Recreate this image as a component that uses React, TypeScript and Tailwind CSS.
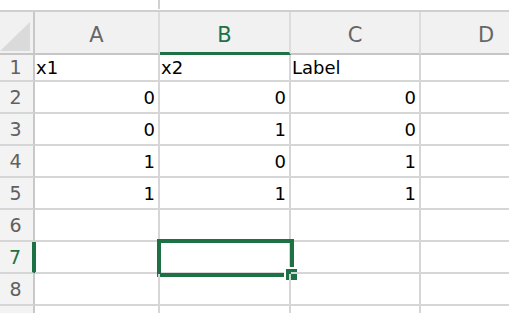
import React from 'react';

const COLS = [
    { key: 'A', w: 'w-[125px]' },
    { key: 'B', w: 'w-[131px]' },
    { key: 'C', w: 'w-[130px]' },
    { key: 'D', w: 'w-[132px]' },
];

const ROWS: (string | number)[][] = [
    ['x1', 'x2', 'Label'],
    [0, 0, 0],
    [0, 1, 0],
    [1, 0, 1],
    [1, 1, 1],
    [],
    [],
    [],
    [],
];

const App: React.FC = () => {
    return (
        <div className="w-[509px] h-[313px] overflow-hidden bg-white font-['DejaVu_Sans',sans-serif]">
            {/* toolbar leftovers */}
            <div className="h-[10px] flex">
                <div className="w-[158px]" />
                <div className="w-[2px] h-[9px] bg-[#d0d0d0]" />
            </div>
            <div className="h-[2px] bg-[#cfcfcf]" />

            {/* column headers */}
            <div className="flex h-[43px] bg-[#f1f1f1] w-[560px]">
                <div className="w-[35px] shrink-0 border-r-2 border-b-2 border-r-[#c8c8c8] border-b-[#c6c6c6] flex items-end">
                    <svg width="31" height="29" viewBox="0 0 31 29" className="mb-[2px]">
                        <polygon points="30,0 30,29 0,29" fill="#dadada" />
                    </svg>
                </div>
                {COLS.map((c) => (
                    <div
                        key={c.key}
                        className={`${c.w} shrink-0 border-r-2 border-r-[#dcdcdc] flex items-center justify-center pt-[7px] text-[21px] ${
                            c.key === 'B'
                                ? 'border-b-[3px] border-b-[#1e7145] text-[#1e7145]'
                                : 'border-b-2 border-b-[#c6c6c6] text-[#666666]'
                        }`}
                    >
                        {c.key}
                    </div>
                ))}
            </div>

            {/* rows */}
            {ROWS.map((row, i) => {
                const n = i + 1;
                const active = n === 7;
                return (
                    <div key={n} className={`flex w-[560px] ${n === 1 ? 'h-[27px]' : 'h-[32px]'}`}>
                        <div
                            className={`w-[35px] shrink-0 bg-[#f3f3f3] border-b-2 border-b-[#d6d6d6] flex items-center justify-center pr-[2px] text-[19px] ${
                                active
                                    ? 'border-r-4 border-r-[#1e7145] text-[#1e7145] -mr-[1px] w-[36px]'
                                    : 'border-r-2 border-r-[#c8c8c8] text-[#606060]'
                            }`}
                        >
                            {n < 9 ? n : ''}
                        </div>
                        {COLS.map((c, j) => {
                            const v = row[j];
                            const isNum = typeof v === 'number';
                            return (
                                <div
                                    key={c.key}
                                    className={`${c.w} shrink-0 relative border-r-2 border-b-2 border-[#d6d6d6] flex items-center text-[18px] text-black ${
                                        isNum ? 'justify-end pr-[3px]' : 'pl-[1px]'
                                    }`}
                                >
                                    {v !== undefined ? String(v) : ''}
                                    {active && c.key === 'B' && (
                                        <div className="absolute -left-[3px] -top-[3px] w-[137px] h-[38px] border-4 border-[#1e7145]">
                                            <div className="absolute -right-[9px] -bottom-[9px] w-[15px] h-[15px] bg-[#1e7145] border-2 border-white" />
                                        </div>
                                    )}
                                </div>
                            );
                        })}
                    </div>
                );
            })}
        </div>
    );
};

export default App;
